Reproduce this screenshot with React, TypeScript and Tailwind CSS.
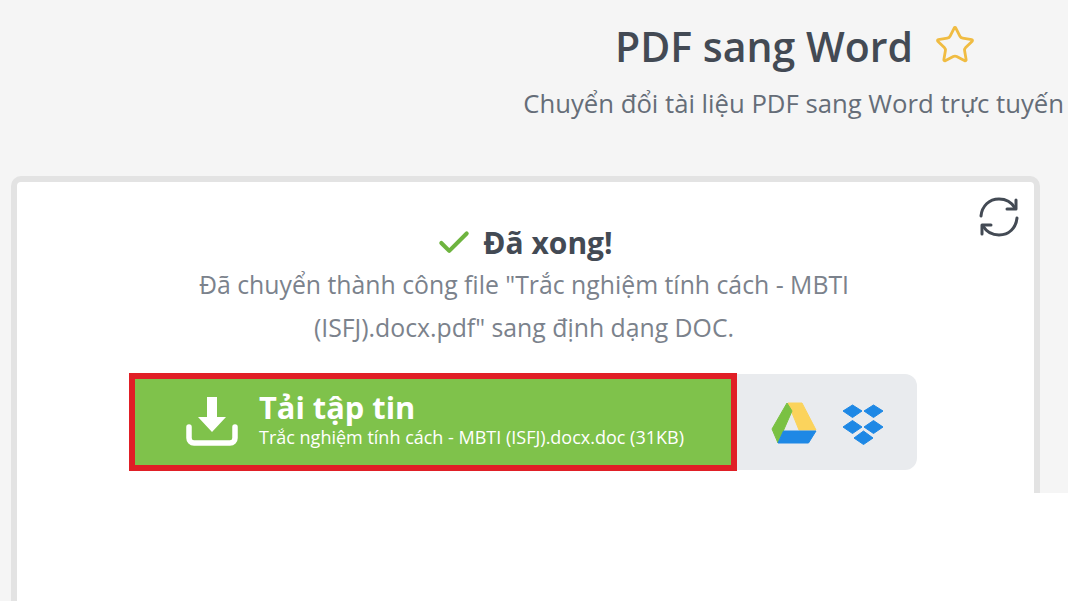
import React from 'react';
import { Check, Star } from 'lucide-react';

const DriveIcon = () => <svg width="46" height="42" viewBox="0 0 46 42" strokeLinejoin="round" className="mt-[2px]">
    <path d="M17 1H31L45 28H28Z" fill="#fbd35c" stroke="#fbd35c" />
    <path d="M16 1L21 9L7 41L1 27Z" fill="#7ac143" stroke="#7ac143" />
    <path d="M12.5 29H45L37.5 41H7Z" fill="#1e88e5" stroke="#1e88e5" />
  </svg>;

const DropboxIcon = () => <svg width="42" height="41" viewBox="0 0 42 41" fill="#1e88e5" stroke="#1e88e5" strokeLinejoin="round" className="mt-[4px]">
    <path d="M10.5 1L20 7L10.5 13.5L1 7Z" />
    <path d="M31.5 1L41 7L31.5 13.5L22 7Z" />
    <path d="M10.5 16.5L20 23L10.5 29.5L1 23Z" />
    <path d="M31.5 16.5L41 23L31.5 29.5L22 23Z" />
    <path d="M21.5 27L31 34L21.5 40.5L12 34Z" />
  </svg>;

const DownloadIcon = () => <svg width="52" height="50" viewBox="0 0 52 50" fill="none">
    <path d="M21 0H31V20H40L26 35L12 20H21Z" fill="#fff" />
    <path d="M3 30V41C3 44 5 46 8 46H44C47 46 49 44 49 41V30" stroke="#fff" strokeWidth="5.5" strokeLinecap="round" />
  </svg>;

const RefreshIcon = () => <svg width="40" height="40" viewBox="0 0 40 40" fill="none" stroke="#434a54" strokeWidth="3" strokeLinecap="round" strokeLinejoin="round">
    <path d="M2 19C3 9 10 2 20 2C27 2 33 6 36 11" />
    <path d="M38 21C37 31 30 38 20 38C13 38 7 34 4 29" />
    <path d="M37 3V12H28" />
    <path d="M3 37V28H12" />
  </svg>;

export default function App() {
  return <div className="w-[1068px] h-[601px] overflow-hidden bg-[#f5f5f5] font-['Open_Sans',sans-serif] relative">
      <header className="h-[176px] pt-[19px] flex flex-col items-end pr-[4px]">
        <div className="flex items-center w-[540px] pl-[91px] h-[54px]">
          <h1 className="text-[41px] leading-[54px] font-semibold text-[#434a54] whitespace-nowrap">PDF sang Word</h1>
          <Star size={42} strokeWidth={1.6} className="ml-[21px] -mt-[2px] text-[#f0bc42]" />
        </div>
        <p className="mt-[14px] text-[25.7px] leading-[34px] text-[#656d78] whitespace-nowrap">Chuyển đổi tài liệu PDF sang Word trực tuyến</p>
      </header>
      <main className="relative ml-[11px] w-[1029px] h-[460px] bg-white border-[6px] border-[#e3e3e3] rounded-[10px]">
        <button className="absolute right-[15px] top-[15px]" aria-label="Làm mới">
          <RefreshIcon />
        </button>
        <div className="flex flex-col items-center pt-[43px] pr-[3px]">
          <div className="flex items-center h-[36px]">
            <Check size={38} strokeWidth={2.6} className="text-[#6eb43f] mr-[10px]" />
            <span className="text-[30px] leading-[36px] font-bold text-[#434a54]">Đã xong!</span>
          </div>
          <p className="mt-[2px] w-[720px] text-center text-[24.8px] leading-[43px] text-[#7b828c]">Đã chuyển thành công file "Trắc nghiệm tính cách - MBTI (ISFJ).docx.pdf" sang định dạng DOC.</p>
          <div className="mt-[24px] mr-[2px] flex items-stretch h-[98px] w-[788px]">
            <button className="w-[608px] bg-[#7fc24b] border-[6px] border-[#e01f26] flex items-center text-white text-left">
              <span className="ml-[51px] mr-[21px]"><DownloadIcon /></span>
              <span className="flex flex-col pb-[6px]">
                <span className="text-[30.8px] leading-[36px] font-bold">Tải tập tin</span>
                <span className="text-[18px] leading-[24px]">Trắc nghiệm tính cách - MBTI (ISFJ).docx.doc (31KB)</span>
              </span>
            </button>
            <div className="flex-1 my-[1px] bg-[#e9ebee] rounded-r-[12px] flex items-center pl-[34px] gap-[25px]">
              <DriveIcon />
              <DropboxIcon />
            </div>
          </div>
        </div>
      </main>
      <div className="absolute left-[100px] right-0 top-[493px] bottom-0 bg-white" />
    </div>;
}
